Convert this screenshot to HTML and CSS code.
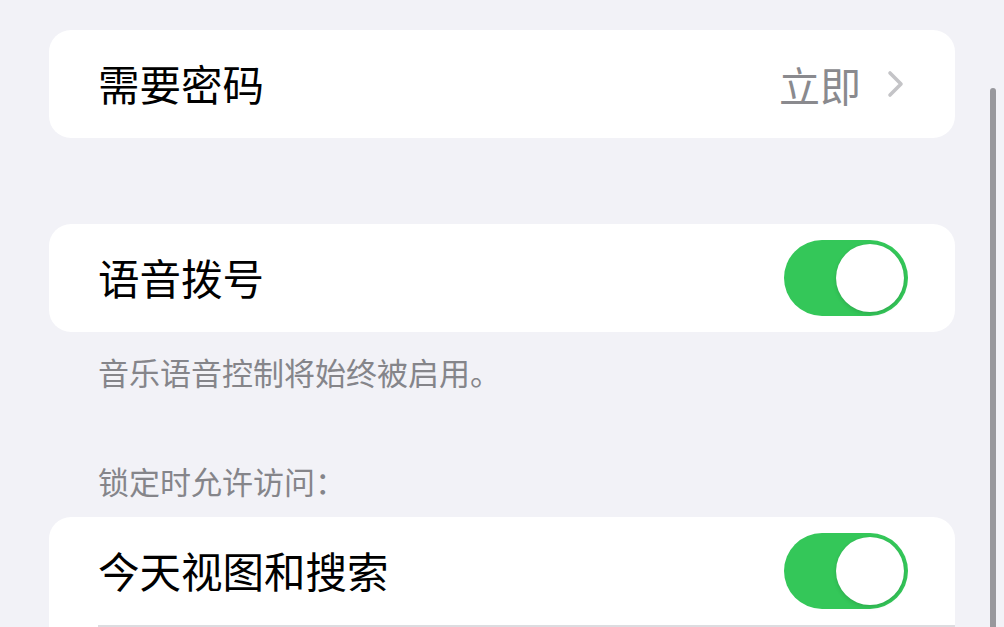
FILE: index.html
```html
<!DOCTYPE html>
<html lang="zh-CN">
<head>
<meta charset="utf-8">
<title>面容ID与密码</title>
<link rel="stylesheet" href="styles.css">
</head>
<body>
<div class="page">
  <section class="group">
    <div class="card">
      <div class="row">
        <span class="label">需要密码</span>
        <span class="detail">立即
          <svg class="chev" width="18" height="28" viewBox="0 0 18 28"><path d="M3 3 L14 14 L3 25" fill="none" stroke="#c4c4c7" stroke-width="3.6" stroke-linecap="round" stroke-linejoin="round"/></svg>
        </span>
      </div>
    </div>
  </section>

  <section class="group group-2">
    <div class="card">
      <div class="row">
        <span class="label">语音拨号</span>
        <span class="toggle on"><span class="knob"></span></span>
      </div>
    </div>
    <p class="footer">音乐语音控制将始终被启用。</p>
  </section>

  <section class="group group-3">
    <p class="header">锁定时允许访问：</p>
    <div class="card">
      <div class="row">
        <span class="label">今天视图和搜索</span>
        <span class="toggle on"><span class="knob"></span></span>
      </div>
      <div class="row sep"></div>
    </div>
  </section>
</div>
<div class="scrollbar"></div>
</body>
</html>
```

FILE: styles.css
```css
html, body {
  margin: 0;
  padding: 0;
  height: 100%;
  overflow: hidden;
}
body {
  background: #f2f2f7;
  font-family: "Noto Sans CJK SC", "Noto Sans", sans-serif;
  position: relative;
}
.page {
  padding: 30px 49px 0 49px;
  display: flex;
  flex-direction: column;
}
.card {
  background: #ffffff;
  border-radius: 22px;
  overflow: hidden;
}
.row {
  height: 108px;
  display: flex;
  align-items: center;
  justify-content: space-between;
  padding: 0 48px 0 49px;
  position: relative;
}
.row.sep::before {
  content: "";
  position: absolute;
  top: 0;
  left: 49px;
  right: 0;
  height: 2px;
  background: #dcdce0;
}
.label {
  font-size: 41.5px;
  color: #000;
  line-height: 1;
}
.detail {
  display: flex;
  align-items: center;
  gap: 26px;
  font-size: 41px;
  color: #8a8a8e;
  line-height: 1;
}
.chev {
  display: block;
  margin-right: 2px;
}
.group-2 {
  margin-top: 86px;
}
.footer {
  margin: 18px 0 0 49px;
  font-size: 31px;
  line-height: 44px;
  color: #85858a;
}
.group-3 {
  margin-top: 65px;
}
.header {
  margin: 0 0 14px 49px;
  font-size: 31px;
  line-height: 44px;
  color: #85858a;
}
.toggle {
  width: 124px;
  height: 76px;
  border-radius: 38px;
  background: #34c759;
  display: flex;
  align-items: center;
  justify-content: flex-end;
  padding: 0 4px;
  box-sizing: border-box;
  margin-right: -1px;
}
.knob {
  width: 68px;
  height: 68px;
  border-radius: 50%;
  background: #fff;
  box-shadow: 0 2px 4px rgba(0,0,0,0.12), 0 0 1px rgba(0,0,0,0.1);
}
.scrollbar {
  position: absolute;
  left: 990px;
  top: 88px;
  width: 6px;
  bottom: -10px;
  border-radius: 3px;
  background: #98989d;
}
```
